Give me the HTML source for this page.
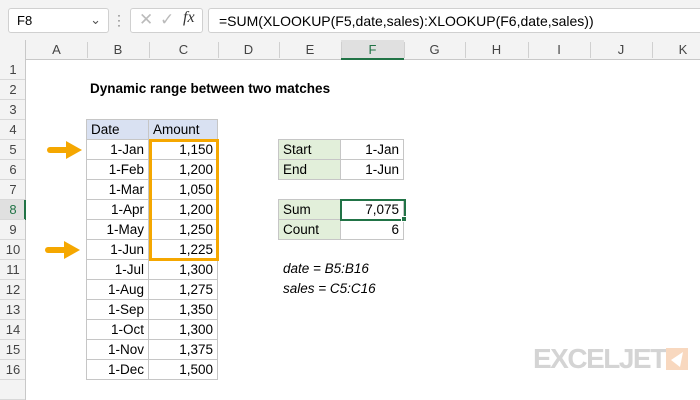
<!DOCTYPE html>
<html><head><meta charset="utf-8"><style>
*{margin:0;padding:0;box-sizing:border-box}
body{width:700px;height:400px;overflow:hidden;background:#fff;font-family:"Liberation Sans",sans-serif;font-size:13px;color:#000;position:relative}
.a{position:absolute}
.hd{position:absolute;color:#444;font-size:13px;text-align:center;line-height:19px}
.c{position:absolute;height:20px;line-height:20px;padding:0 4px;font-size:13.5px;white-space:nowrap}
</style></head><body>
<div class="a" style="left:0;top:0;width:700px;height:40px;background:#f3f3f3"></div>
<div class="a" style="left:8px;top:8px;width:101px;height:25px;background:#fff;border:1px solid #d0d0d0;border-radius:3px;padding:4px 8px;font-size:13px">F8<span style="position:absolute;right:7px;top:3px;color:#555">&#8964;</span></div>
<div class="a" style="left:117px;top:13px;width:3px;height:16px;color:#555;font-size:12px;line-height:5px">·<br>·<br>·</div>
<div class="a" style="left:130px;top:8px;width:73px;height:25px;background:#fff;border:1px solid #d0d0d0;border-radius:3px"></div>
<div class="a" style="left:139px;top:10px;color:#bbb;font-size:17px">✕</div>
<div class="a" style="left:160px;top:10px;color:#bbb;font-size:17px">✓</div>
<div class="a" style="left:183px;top:9px;color:#333;font-family:'Liberation Serif',serif;font-style:italic;font-size:16px">fx</div>
<div class="a" style="left:208px;top:8px;width:500px;height:25px;background:#fff;border:1px solid #d0d0d0;border-radius:3px;padding:4px 10px;font-size:14px">=SUM(XLOOKUP(F5,date,sales):XLOOKUP(F6,date,sales))</div>
<div class="a" style="left:0;top:40px;width:700px;height:20px;background:#f3f3f3;border-bottom:1px solid #c8c8c8"></div>
<div class="a" style="left:0;top:40px;width:26px;height:360px;background:#f3f3f3;border-right:1px solid #c8c8c8"></div>
<div class="a" style="left:341px;top:40px;width:63px;height:20px;background:#e0e0e0;border-bottom:2px solid #217346"></div>
<div class="a" style="left:0;top:200px;width:26px;height:20px;background:#e0e0e0;border-right:2px solid #217346"></div>
<div id="g"></div>
<div class="a" style="left:90px;top:81px;font-weight:bold;font-size:13.5px">Dynamic range between two matches</div>
<div id="t"></div>
<div class="a" style="left:149px;top:139px;width:70px;height:122px;border:3px solid #f5a700"></div>
<svg class="a" style="left:44px;top:138px" width="42" height="24"><path d="M6 12H24" stroke="#f5a700" stroke-width="6" stroke-linecap="round"/><path d="M22 3L38 12L22 21Z" fill="#f5a700"/></svg>
<svg class="a" style="left:42px;top:238px" width="42" height="24"><path d="M6 12H24" stroke="#f5a700" stroke-width="6" stroke-linecap="round"/><path d="M22 3L38 12L22 21Z" fill="#f5a700"/></svg>
<div class="a" style="left:340px;top:199px;width:66px;height:22px;border:2px solid #217346"></div>
<div class="a" style="left:401px;top:216px;width:6px;height:6px;background:#217346;border:1px solid #fff"></div>
<div class="a" style="left:283px;top:261px;font-style:italic;font-size:13.5px">date = B5:B16</div>
<div class="a" style="left:283px;top:281px;font-style:italic;font-size:13.5px">sales = C5:C16</div>
<div class="a" style="left:533px;top:343px;font-size:28px;font-weight:bold;color:#d4d4d4;letter-spacing:-1.5px;font-family:'Liberation Sans',sans-serif">EXCELJET</div>
<div class="a" style="left:666px;top:348px;width:22px;height:22px;background:#f8d8bf"></div>
<svg class="a" style="left:666px;top:348px" width="22" height="22"><path d="M5 12L17 4L14 19Z" fill="#fff"/></svg>
<script>
var cols=[["A",26,87],["B",87,149],["C",149,218],["D",218,279],["E",279,341],["F",341,404],["G",404,465],["H",465,528],["I",528,590],["J",590,652],["K",652,714]];
var h="";
cols.forEach(function(c){h+='<div class="hd" style="left:'+c[1]+'px;top:40px;width:'+(c[2]-c[1])+'px;'+(c[0]=="F"?'color:#217346':'')+'">'+c[0]+'</div>';h+='<div class="a" style="left:'+c[2]+'px;top:42px;width:1px;height:16px;background:#d0d0d0"></div>';});
for(var r=1;r<=17;r++){var y=60+20*(r-1);h+='<div class="hd" style="left:0;top:'+y+'px;width:26px;height:20px;line-height:20px;'+(r==8?'color:#217346':'')+'">'+(r<=16?r:'')+'</div>';h+='<div class="a" style="left:0;top:'+(y+19)+'px;width:25px;height:1px;background:#d8d8d8"></div>';}
document.getElementById("g").innerHTML=h;
var d=["1-Jan","1-Feb","1-Mar","1-Apr","1-May","1-Jun","1-Jul","1-Aug","1-Sep","1-Oct","1-Nov","1-Dec"];
var a=["1,150","1,200","1,050","1,200","1,250","1,225","1,300","1,275","1,350","1,300","1,375","1,500"];
var t="";
function cell(x,y,w,txt,al,bg){return '<div class="c" style="left:'+x+'px;top:'+y+'px;text-align:'+al+';background:'+bg+';border:1px solid #c6c6c6;margin:-1px 0 0 -1px;width:'+(w+1)+'px;height:21px">'+txt+'</div>';}
t+=cell(87,120,62,"Date","left","#d9e1f2")+cell(149,120,69,"Amount","left","#d9e1f2");
for(var i=0;i<12;i++){var y=140+20*i;t+=cell(87,y,62,d[i],"right","#fff")+cell(149,y,69,a[i],"right","#fff");}
t+=cell(279,140,62,"Start","left","#e2efda")+cell(341,140,63,"1-Jan","right","#fff");
t+=cell(279,160,62,"End","left","#e2efda")+cell(341,160,63,"1-Jun","right","#fff");
t+=cell(279,200,62,"Sum","left","#e2efda")+cell(341,200,63,"7,075","right","#fff");
t+=cell(279,220,62,"Count","left","#e2efda")+cell(341,220,63,"6","right","#fff");
document.getElementById("t").innerHTML=t;
</script>
</body></html>
